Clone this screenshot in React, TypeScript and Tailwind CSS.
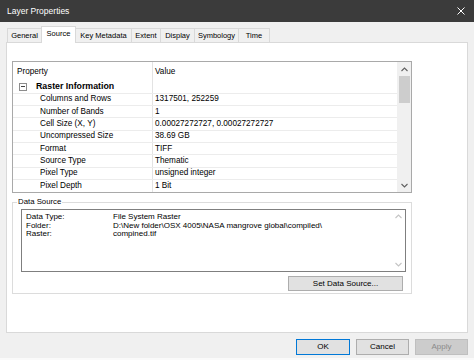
const tabs = [
  { label: "General", w: "w-[35px]" },
  { label: "Source", w: "w-[35px]", active: true },
  { label: "Key Metadata", w: "w-[57px]" },
  { label: "Extent", w: "w-[30px]" },
  { label: "Display", w: "w-[35px]" },
  { label: "Symbology", w: "w-[45px]" },
  { label: "Time", w: "w-[32px]" },
]

const rows = [
  ["Columns and Rows", "1317501, 252259"],
  ["Number of Bands", "1"],
  ["Cell Size (X, Y)", "0.00027272727, 0.00027272727"],
  ["Uncompressed Size", "38.69 GB"],
  ["Format", "TIFF"],
  ["Source Type", "Thematic"],
  ["Pixel Type", "unsigned integer"],
  ["Pixel Depth", "1 Bit"],
]

const source = [
  ["Data Type:", "File System Raster"],
  ["Folder:", "D:\\New folder\\OSX 4005\\NASA mangrove global\\compiled\\"],
  ["Raster:", "compined.tif"],
]

function Chevron({ up, color }: { up?: boolean; color: string }) {
  return (
    <svg width="7" height="5" viewBox="0 0 7 5">
      <path d={up ? "M0.5 4 L3.5 1 L6.5 4" : "M0.5 1 L3.5 4 L6.5 1"} fill="none" stroke={color} strokeWidth="1.1" />
    </svg>
  )
}

export default function App() {
  return (
    <div className="w-[474px] h-[360px] bg-[#f0f0f0] flex flex-col overflow-hidden text-black font-['Liberation_Sans',Arial,sans-serif]">
      {/* Title bar */}
      <div className="h-[22px] shrink-0 bg-[#3b3b3b] flex items-center justify-between pl-[7px] pr-[9px] text-white text-[8.5px]">
        <span>Layer Properties</span>
        <svg width="8" height="8" viewBox="0 0 8 8">
          <path d="M0.5 0.5 L7.5 7.5 M7.5 0.5 L0.5 7.5" stroke="#ffffff" strokeWidth="1" />
        </svg>
      </div>

      {/* Tabs */}
      <div className="h-[20px] shrink-0 flex items-end pl-[7px] relative z-10">
        {tabs.map((t) => (
          <div
            key={t.label}
            className={`${t.w} -ml-px first:ml-0 flex items-center justify-center text-[7.5px] border border-b-0 border-[#d9d9d9] ${
              t.active ? "h-[17px] bg-white -mb-px pb-[2px]" : "h-[14px] bg-[#f0f0f0]"
            }`}
          >
            {t.label}
          </div>
        ))}
      </div>

      {/* Panel */}
      <div className="mx-[6px] h-[291px] shrink-0 bg-white border border-[#d9d9d9] flex flex-col">
        {/* Property grid */}
        <div className="ml-[5px] mt-[18px] w-[400px] h-[132px] border border-[#a9a9a9] flex text-[8.2px]">
          <div className="flex-1 flex flex-col">
            <div className="h-[19px] flex">
              <div className="w-[139px] pl-[4px] pt-[4px]">Property</div>
              <div className="flex-1 border-l border-[#e3e3e3] pl-[2px] pt-[4px]">Value</div>
            </div>
            <div className="h-[13px] flex border-b border-[#ececec]">
              <div className="w-[139px] flex items-center pl-[6px]">
                <div className="w-[8px] h-[8px] border border-[#8c8c8c] flex items-center justify-center">
                  <div className="w-[4px] h-px bg-[#444]" />
                </div>
                <span className="ml-[9px] font-bold text-[8.8px]">Raster Information</span>
              </div>
              <div className="flex-1 border-l border-[#e3e3e3]" />
            </div>
            {rows.map(([k, v]) => (
              <div key={k} className="h-[12.3px] flex items-center border-b border-[#ececec] last:border-b-0">
                <div className="w-[139px] pl-[27px] leading-none">{k}</div>
                <div className="flex-1 self-stretch flex items-center border-l border-[#e3e3e3] pl-[2px] leading-none">{v}</div>
              </div>
            ))}
          </div>
          <div className="w-[14px] bg-[#f0f0f0] flex flex-col items-center">
            <div className="h-[14px] flex items-center justify-center">
              <Chevron up color="#606060" />
            </div>
            <div className="w-[11px] h-[27px] bg-[#cdcdcd]" />
            <div className="flex-1" />
            <div className="h-[13px] flex items-center justify-center">
              <Chevron color="#606060" />
            </div>
          </div>
        </div>

        {/* Data Source group */}
        <fieldset className="ml-[5px] mt-[4px] w-[400px] border border-[#dcdcdc] pb-[2px] flex flex-col">
          <legend className="ml-[4px] px-[1px] text-[7.8px] leading-[10px]">Data Source</legend>
          <div className="ml-[8px] mt-[2px] w-[385px] h-[63px] border border-[#7f7f7f] flex text-[8px]">
            <div className="flex-1 pl-[4px] pt-[3px]">
              {source.map(([k, v]) => (
                <div key={k} className="flex h-[8.6px] items-center leading-none">
                  <span className="w-[87px]">{k}</span>
                  <span>{v}</span>
                </div>
              ))}
            </div>
            <div className="w-[13px] flex flex-col items-center justify-between py-[4px]">
              <Chevron up color="#c4c4c4" />
              <Chevron color="#c4c4c4" />
            </div>
          </div>
          <div className="self-end mr-[8px] mt-[4px] w-[115px] h-[15px] bg-[#e1e1e1] border border-[#adadad] flex items-center justify-center text-[8px]">
            Set Data Source...
          </div>
        </fieldset>
      </div>

      {/* Buttons */}
      <div className="flex-1 flex justify-end items-start gap-[6px] pt-[6px] pr-[6px] text-[8px]">
        <div className="w-[54px] h-[16px] bg-[#e1e1e1] border border-[#0078d7] flex items-center justify-center">OK</div>
        <div className="w-[53px] h-[16px] bg-[#e1e1e1] border border-[#adadad] flex items-center justify-center">Cancel</div>
        <div className="w-[53px] h-[16px] bg-[#cccccc] border border-[#bfbfbf] flex items-center justify-center text-[#8a8a8a]">Apply</div>
      </div>
      <div className="h-[2px] shrink-0 bg-[#fafafa]" />
    </div>
  )
}
